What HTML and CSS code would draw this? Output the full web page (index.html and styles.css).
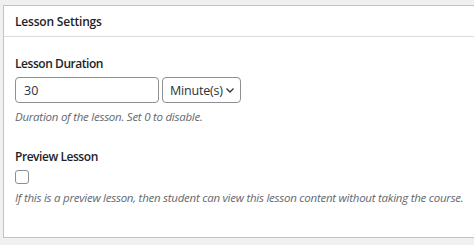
FILE: index.html
```html
<!DOCTYPE html>
<html lang="en">
<head>
  <meta charset="UTF-8">
  <title>Lesson Settings</title>
  <link rel="stylesheet" href="styles.css">
</head>
<body>
  <div class="postbox">
    <div class="postbox-header">
      <h2>Lesson Settings</h2>
    </div>
    <div class="inside">
      <div class="field">
        <label for="duration">Lesson Duration</label>
        <div class="duration-row">
          <input type="text" id="duration" value="30">
          <div class="select">Minute(s)
            <svg width="10" height="10" viewBox="0 0 10 10"><path d="M1.5 3.5 L5 7 L8.5 3.5" fill="none" stroke="#2c3338" stroke-width="1.3"/></svg>
          </div>
        </div>
        <p class="description">Duration of the lesson. Set 0 to disable.</p>
      </div>
      <div class="field">
        <label for="preview">Preview Lesson</label>
        <div class="checkbox"></div>
        <p class="description">If this is a preview lesson, then student can view this lesson content without taking the course.</p>
      </div>
    </div>
  </div>
</body>
</html>
```

FILE: styles.css
```css
body {
  margin: 0;
  background: #f0f0f1;
  font-family: 'Open Sans', sans-serif;
  color: #1d2327;
  overflow: hidden;
}
.postbox {
  margin: 5px 0 0 3px;
  width: 520px;
  height: 231px;
  background: #fff;
  border: 1px solid #c3c4c7;
}
.postbox-header {
  height: 30px;
  border-bottom: 1px solid #dcdcde;
  display: flex;
  align-items: center;
  padding-left: 11px;
}
.postbox-header h2 {
  margin: 0;
  font-size: 12px;
  font-weight: 600;
  letter-spacing: -0.2px;
}
.inside {
  padding: 18px 11px 0;
}
.field label {
  display: block;
  font-size: 12px;
  font-weight: 600;
  letter-spacing: -0.45px;
  line-height: 18px;
  margin-bottom: 4px;
}
.duration-row {
  display: flex;
  gap: 3px;
}
.duration-row input {
  width: 144px;
  height: 26px;
  box-sizing: border-box;
  border: 1px solid #8c8f94;
  border-radius: 4px;
  padding: 0 8px;
  font-family: inherit;
  font-size: 12.5px;
  color: #2c3338;
}
.select {
  width: 79px;
  height: 26px;
  box-sizing: border-box;
  border: 1px solid #8c8f94;
  border-radius: 4px;
  padding: 0 5px 0 7px;
  font-size: 12.5px;
  letter-spacing: -0.2px;
  color: #2c3338;
  display: flex;
  align-items: center;
  justify-content: space-between;
}
.description {
  margin: 5px 0 22px;
  font-size: 11.5px;
  font-style: italic;
  letter-spacing: -0.25px;
  color: #646970;
  line-height: 18px;
}
.checkbox {
  width: 14px;
  height: 14px;
  box-sizing: border-box;
  border: 1px solid #8c8f94;
  border-radius: 3px;
  margin: 3px 0 4px;
}
```
